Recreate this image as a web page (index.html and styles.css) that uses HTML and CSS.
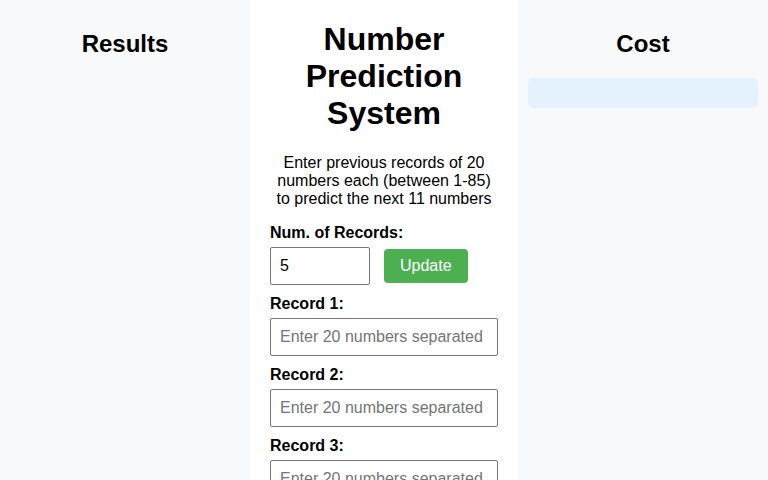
FILE: index.html
```html
<!DOCTYPE html>
<html>
<head>
<meta charset="utf-8">
<link rel="stylesheet" href="styles.css">
</head>
<body>
<div class="layout">
  <aside class="side">
    <h2>Results</h2>
  </aside>
  <main class="main">
    <h1>Number Prediction System</h1>
    <p class="intro">Enter previous records of 20 numbers each (between 1-85) to predict the next 11 numbers</p>
    <div class="field">
      <label>Num. of Records:</label>
      <div class="row">
        <input class="count" type="text" value="5">
        <button class="btn">Update</button>
      </div>
    </div>
    <div class="field">
      <label>Record 1:</label>
      <input class="rec" type="text" placeholder="Enter 20 numbers separated by commas">
    </div>
    <div class="field">
      <label>Record 2:</label>
      <input class="rec" type="text" placeholder="Enter 20 numbers separated by commas">
    </div>
    <div class="field">
      <label>Record 3:</label>
      <input class="rec" type="text" placeholder="Enter 20 numbers separated by commas">
    </div>
    <div class="field">
      <label>Record 4:</label>
      <input class="rec" type="text" placeholder="Enter 20 numbers separated by commas">
    </div>
    <div class="field">
      <label>Record 5:</label>
      <input class="rec" type="text" placeholder="Enter 20 numbers separated by commas">
    </div>
  </main>
  <aside class="side">
    <h2>Cost</h2>
    <div class="cost-box"></div>
  </aside>
</div>
</body>
</html>
```
FILE: styles.css
```css
html, body {
  margin: 0;
  padding: 0;
}
body {
  font-family: "Liberation Sans", Arial, sans-serif;
  color: #000;
  background: #f8f9fa;
}
.layout {
  display: flex;
  align-items: stretch;
  min-height: 100vh;
}
.side {
  width: 250px;
  box-sizing: border-box;
  padding: 10px;
  background: #f8f9fa;
}
.side h2 {
  text-align: center;
  font-size: 24px;
  margin: 19.92px 0;
}
.cost-box {
  height: 30px;
  background: #e3f2fd;
  border-radius: 5px;
}
.main {
  width: 268px;
  box-sizing: border-box;
  padding: 0 20px 20px;
  background: #fff;
}
.main h1 {
  text-align: center;
  font-size: 32px;
  margin: 21.44px 0;
}
.intro {
  text-align: center;
  font-size: 16px;
  margin: 16px 0;
}
.field {
  margin-bottom: 10px;
}
.field label {
  display: block;
  font-weight: bold;
  margin-bottom: 5px;
}
.row {
  display: flex;
  align-items: center;
  gap: 14px;
}
input {
  font: inherit;
  font-size: 16px;
  box-sizing: border-box;
  height: 38px;
  padding: 8px 9px;
  border: 1px solid #767676;
  border-radius: 2px;
  color: #000;
}
input::placeholder {
  color: #757575;
}
.count {
  width: 100px;
}
.rec {
  width: 100%;
}
.btn {
  font: inherit;
  font-size: 16px;
  background: #4caf50;
  color: #fff;
  border: none;
  border-radius: 4px;
  padding: 8px 16px;
  height: 34px;
}
```
